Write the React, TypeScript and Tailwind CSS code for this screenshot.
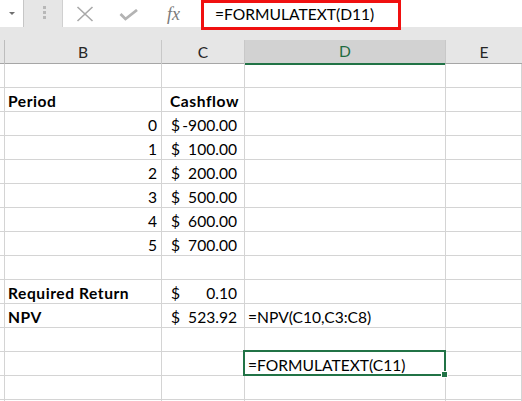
import React from 'react'

// ** sheet data
type Row = {
    b?: string
    bBold?: boolean
    bRight?: boolean
    c?: string
    cBold?: boolean
    cMoney?: [string, string]
    d?: string
    selected?: boolean
}

const rows: Row[] = [
    {},
    { b: 'Period', bBold: true, c: 'Cashflow', cBold: true },
    { b: '0', bRight: true, cMoney: ['$', '-900.00'] },
    { b: '1', bRight: true, cMoney: ['$', '100.00'] },
    { b: '2', bRight: true, cMoney: ['$', '200.00'] },
    { b: '3', bRight: true, cMoney: ['$', '500.00'] },
    { b: '4', bRight: true, cMoney: ['$', '600.00'] },
    { b: '5', bRight: true, cMoney: ['$', '700.00'] },
    {},
    { b: 'Required Return', bBold: true, cMoney: ['$', '0.10'] },
    { b: 'NPV', bBold: true, cMoney: ['$', '523.92'], d: '=NPV(C10,C3:C8)' },
    {},
    { d: '=FORMULATEXT(C11)', selected: true },
    {},
    {},
]

const cell = 'flex items-end pb-[1px] leading-[18px] border-r border-b border-[#d4d4d4] min-w-0 overflow-visible whitespace-nowrap'

const FormulaBar = () => (
    <div className="flex h-[27px] bg-white">
        {/* Name box stub */}
        <div className="flex w-[24px] items-center justify-center border-r border-[#c6c6c6] bg-white pl-[1px]">
            <div className="h-0 w-0 border-x-[3px] border-t-[3px] border-x-transparent border-t-[#6f6f6f]" />
        </div>

        {/* Gap with grip */}
        <div className="flex w-[38px] flex-col items-center gap-[2px] bg-[#e6e6e6] pt-[6px] pl-[2px]">
            <div className="h-[3px] w-[3px] bg-[#b8b8b8]" />
            <div className="h-[3px] w-[3px] bg-[#b8b8b8]" />
            <div className="h-[3px] w-[3px] bg-[#b8b8b8]" />
        </div>

        {/* Cancel / Enter / Function */}
        <div className="flex w-[139px] items-center border-l border-[#d0d0d0] bg-white">
            <svg width="18" height="16" viewBox="0 0 18 16" className="ml-[13px]">
                <path d="M1.5 1 L16.5 15 M16.5 1 L1.5 15" stroke="#a9a9a9" strokeWidth="1.6" fill="none" />
            </svg>
            <svg width="20" height="12" viewBox="0 0 20 12" className="ml-[25px] mt-[3px]">
                <path d="M1.5 5 L6.5 10 L18 1" stroke="#b3b3b3" strokeWidth="2.8" fill="none" />
            </svg>
            <span className="ml-[28px] font-['Liberation_Serif',serif] text-[18px] italic leading-none text-[#7a7a7a]">
                fx
            </span>
        </div>

        {/* Formula input */}
        <div className="relative flex-1 bg-white">
            <div className="absolute left-0 top-0 z-20 flex h-[30px] w-[200px] items-center border-[3px] border-[#f01010] bg-white pl-[11px] text-[15.6px] text-black">
                =FORMULATEXT(D11)
            </div>
        </div>
    </div>
)

const HeaderRow = () => (
    <div className="grid h-[24px] grid-cols-[5px_157px_83px_201px_1fr] border-b border-[#a6a6a6] bg-[#e6e6e6] text-[15.6px] text-[#262626]">
        <div className="border-r border-[#bdbdbd]" />
        <div className="flex items-center justify-center border-r border-[#c8c8c8]">B</div>
        <div className="flex items-center justify-center border-r border-[#c8c8c8]">C</div>
        <div className="-mb-[1px] flex items-center justify-center border-b-2 border-r border-b-[#217346] border-r-[#c8c8c8] bg-[#d2d2d2] text-[#1f6b41]">
            D
        </div>
        <div className="flex items-center justify-center">E</div>
    </div>
)

export default function App() {
    return (
        <div className="h-[401px] w-[522px] overflow-hidden bg-white font-['Lato',sans-serif] text-[15.6px] text-black">
            <FormulaBar />
            <div className="h-[13px] bg-[#e6e6e6]" />
            <HeaderRow />

            {rows.map((row, i) => (
                <div key={i} className="grid h-[24px] grid-cols-[5px_157px_83px_201px_1fr]">
                    <div className={cell} />
                    <div
                        className={`${cell} ${row.bRight ? 'justify-end pr-[4px]' : 'pl-[3px]'} ${row.bBold ? 'font-bold tracking-[0.55px]' : ''}`}>
                        {row.b}
                    </div>
                    <div className={`${cell} ${row.cBold ? 'font-bold tracking-[0.55px] pl-[8px]' : 'pl-[9px] pr-[7px] justify-between'}`}>
                        {row.c}
                        {row.cMoney && (
                            <>
                                <span>{row.cMoney[0]}</span>
                                <span>{row.cMoney[1]}</span>
                            </>
                        )}
                    </div>
                    <div className={`${cell} relative pl-[3px]`}>
                        {row.d}
                        {row.selected && (
                            <div className="pointer-events-none absolute -left-[2px] -top-[2px] -right-[1px] -bottom-[1px] z-10 border-2 border-[#217346]">
                                <div className="absolute -bottom-[4px] -right-[4px] h-[7px] w-[7px] border border-white bg-[#217346]" />
                            </div>
                        )}
                    </div>
                    <div className={cell} />
                </div>
            ))}
        </div>
    )
}
